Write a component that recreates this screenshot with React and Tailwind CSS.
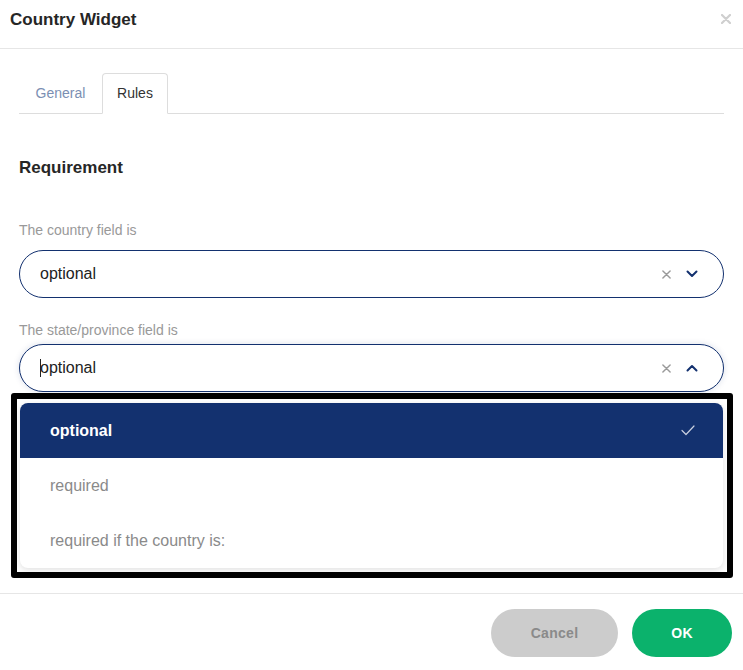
import React from "react";

function XIcon({ size = 9, color = "#9a9a9a", sw = 1.6 }) {
  return (
    <svg width={size} height={size} viewBox="0 0 10 10" fill="none">
      <path d="M1 1L9 9M9 1L1 9" stroke={color} strokeWidth={sw} strokeLinecap="round" />
    </svg>
  );
}

function Chevron({ up }) {
  return (
    <svg width="12" height="8" viewBox="0 0 12 8" fill="none">
      <path
        d={up ? "M1.5 6.5L6 2L10.5 6.5" : "M1.5 1.5L6 6L10.5 1.5"}
        stroke="#13316f"
        strokeWidth="2"
        strokeLinecap="round"
        strokeLinejoin="round"
      />
    </svg>
  );
}

function Select({ up, caret, shadow }) {
  return (
    <div
      className={`h-[48px] rounded-full border border-[#13316f] flex items-center pl-[20px] pr-[25px] bg-white ${
        shadow ? "shadow-[0_0_6px_rgba(19,49,111,0.15)]" : ""
      }`}
    >
      <div className="flex-1 flex items-center text-[16px] text-[#222]">
        {caret && <span className="w-px h-[18px] bg-[#222] mr-[-1px]" />}
        <span>optional</span>
      </div>
      <div className="flex items-center gap-[15px]">
        <XIcon size={9} />
        <Chevron up={up} />
      </div>
    </div>
  );
}

export default function App() {
  return (
    <div className="w-[743px] h-[670px] bg-white relative flex flex-col font-['Liberation_Sans',Arial,sans-serif] overflow-hidden">
      {/* Header */}
      <div className="h-[49px] border-b border-[#e6e6e6] flex items-start justify-between pl-[10px] pr-[12px] pt-[10px]">
        <div className="text-[17px] leading-[20px] font-semibold text-[#262626]">Country Widget</div>
        <div className="pt-[4px]">
          <XIcon size={10} color="#cfcfcf" sw={2.2} />
        </div>
      </div>

      {/* Body */}
      <div className="flex-1 px-[19px] pt-[24px]">
        <div className="flex border-b border-[#dddddd]">
          <div className="w-[83px] h-[40px] flex items-center justify-center text-[14px] text-[#7b8fb3]">General</div>
          <div className="w-[66px] h-[41px] -mb-px flex items-center justify-center text-[14px] text-[#333] border border-[#dddddd] border-b-white rounded-t-[4px] bg-white">
            Rules
          </div>
        </div>

        <div className="mt-[44px] text-[17px] leading-[20px] font-semibold text-[#262626]">Requirement</div>

        <div className="mt-[43px] text-[14px] leading-[18px] text-[#999]">The country field is</div>
        <div className="mt-[11px]">
          <Select />
        </div>

        <div className="mt-[23px] text-[14px] leading-[18px] text-[#999]">The state/province field is</div>
        <div className="mt-[5px]">
          <Select up caret shadow />
        </div>
      </div>

      {/* Footer */}
      <div className="h-[77px] border-t border-[#e6e6e6] flex items-start justify-end gap-[14px] pt-[15px] pr-[11px]">
        <button className="w-[127px] h-[48px] rounded-full bg-[#cccccc] text-[#8a8a8a] text-[14px] font-bold tracking-[0.3px]">
          Cancel
        </button>
        <button className="w-[100px] h-[48px] rounded-full bg-[#0bb26c] text-white text-[14px] font-bold tracking-[0.3px]">
          OK
        </button>
      </div>

      {/* Dropdown menu with highlight frame */}
      <div className="absolute left-[11px] top-[393px] w-[722px] border-[6px] border-black rounded-[3px] pt-[4px] pl-[3px] pr-[4px] pb-[4px] bg-white">
        <div className="rounded-[8px] bg-white shadow-[0_2px_6px_rgba(0,0,0,0.12)] overflow-hidden">
          <div className="h-[55px] bg-[#13316f] flex items-center justify-between pl-[30px] pr-[28px]">
            <span className="text-[16px] font-semibold text-white">optional</span>
            <svg width="14" height="11" viewBox="0 0 14 11" fill="none">
              <path d="M1 5.5L5 9.5L13 1" stroke="#c9d0e0" strokeWidth="1.2" strokeLinecap="round" strokeLinejoin="round" />
            </svg>
          </div>
          <div className="h-[55px] flex items-center pl-[30px] text-[16px] text-[#8a8a8a]">required</div>
          <div className="h-[55px] flex items-center pl-[30px] text-[16px] text-[#8a8a8a]">required if the country is:</div>
        </div>
      </div>
    </div>
  );
}
